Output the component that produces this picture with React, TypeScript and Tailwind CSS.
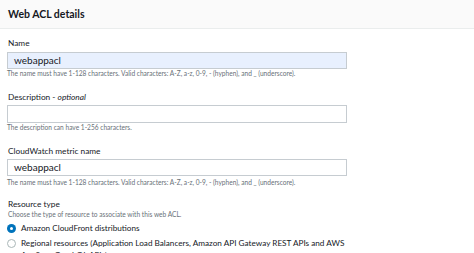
export default function App() {
    return (
        <div className="w-[474px] h-[253px] overflow-hidden bg-white font-['Lato',sans-serif] text-[#16191f]">
            {/* Header */}
            <div className="h-[29px] bg-[#fafafa] border-b border-[#eaeded] px-[8px] flex items-center">
                <h2 className="font-bold text-[10.5px] leading-none">Web ACL details</h2>
            </div>

            <div className="pl-[7px] w-[347px]">
                {/* Name */}
                <p className="mt-[8px] text-[8.3px] leading-[12px] pl-[1px]">Name</p>
                <div className="mt-[3px] h-[17px] border border-[#c6ccd1] bg-[#e8f0fe] flex items-center px-[6px]">
                    <span className="text-[10px]">webappacl</span>
                </div>
                <p className="text-[6.6px] leading-[8px] text-[#687078] whitespace-nowrap">
                    The name must have 1-128 characters. Valid characters: A-Z, a-z, 0-9, - (hyphen), and _ (underscore).
                </p>

                {/* Description */}
                <p className="mt-[14px] text-[8.3px] leading-[12px] pl-[1px]">
                    Description - <span className="italic">optional</span>
                </p>
                <div className="mt-[2px] h-[18px] border border-[#c6ccd1] bg-white" />
                <p className="text-[6.6px] leading-[9px] text-[#687078]">
                    The description can have 1-256 characters.
                </p>

                {/* CloudWatch metric name */}
                <p className="mt-[13px] text-[8.3px] leading-[12px] pl-[1px]">CloudWatch metric name</p>
                <div className="mt-[2px] h-[17px] border border-[#c6ccd1] bg-white flex items-center px-[6px]">
                    <span className="text-[10px]">webappacl</span>
                </div>
                <p className="mt-[2px] text-[6.6px] leading-[9px] text-[#687078] whitespace-nowrap">
                    The name must have 1-128 characters. Valid characters: A-Z, a-z, 0-9, - (hyphen), and _ (underscore).
                </p>

                {/* Resource type */}
                <p className="mt-[11px] text-[8.3px] leading-[12px] pl-[1px]">Resource type</p>
                <p className="text-[6.6px] leading-[8px] text-[#687078] pl-[1px]">
                    Choose the type of resource to associate with this web ACL.
                </p>
                <label className="mt-[3px] flex items-center gap-[5px] h-[14px]">
                    <span className="w-[9px] h-[9px] rounded-full bg-[#0073bb] flex items-center justify-center shrink-0">
                        <span className="w-[3px] h-[3px] rounded-full bg-white" />
                    </span>
                    <span className="text-[8.2px] leading-[12px]">Amazon CloudFront distributions</span>
                </label>
                <label className="mt-[2px] flex items-start gap-[5px]">
                    <span className="mt-[1.5px] w-[9px] h-[9px] rounded-full border border-[#aab7b8] bg-white shrink-0" />
                    <span className="text-[8.2px] leading-[12px]">
                        Regional resources (Application Load Balancers, Amazon API Gateway REST APIs and AWS AppSync GraphQL APIs)
                    </span>
                </label>
            </div>
        </div>
    )
}
